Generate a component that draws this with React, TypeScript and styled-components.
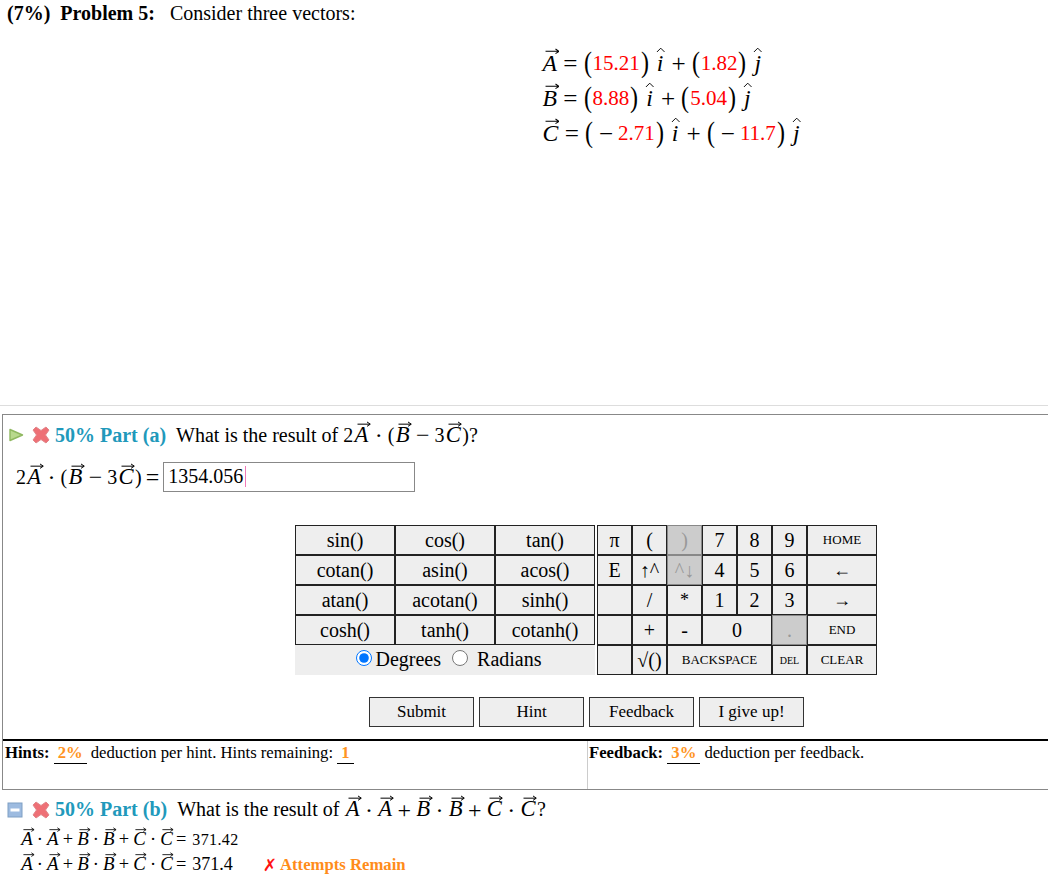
import React from 'react';
import styled, { createGlobalStyle } from 'styled-components';

const GlobalStyle = createGlobalStyle`
  html, body { margin: 0; padding: 0; background: #ffffff; }
  body {
    font-family: "Liberation Serif", "Times New Roman", serif;
    font-size: 20px;
    color: #000;
    overflow: hidden;
  }
`;

const Page = styled.div`
  width: 1048px;
  height: 885px;
  overflow: hidden;
`;

const ProblemHeader = styled.div`
  height: 27px;
  padding-left: 7px;
  display: flex;
  align-items: center;
  line-height: 27px;
`;

const Strong = styled.b<{ $gap?: number }>`
  margin-right: ${p => p.$gap ?? 0}px;
`;

const VectorBlock = styled.div`
  height: 378px;
  box-sizing: border-box;
  padding: 19px 0 0 541px;
`;

const VectorLine = styled.div`
  height: 35px;
  display: flex;
  align-items: center;
  white-space: nowrap;
  font-size: 21px;
`;

const MathOp = styled.span<{ $side?: number }>`
  font-size: 1.2em;
  line-height: 1;
  margin: 0 ${p => p.$side ?? 5}px;
`;

const Red = styled.span`
  color: #ff0000;
`;

const Paren = styled.span`
  font-size: 30px;
  font-weight: 400;
  line-height: 1;
  transform: scaleX(0.8);
  display: inline-block;
  position: relative;
  top: -2px;
`;

const VecWrap = styled.span`
  position: relative;
  display: inline-block;
  font-style: italic;
  font-size: 1.13em;
  line-height: 1;
  margin: 0 0.06em;
`;

const VecArrow = styled.svg`
  position: absolute;
  left: 0.1em;
  top: -0.14em;
  width: 0.62em;
  height: 0.28em;
`;

const HatWrap = styled.span`
  position: relative;
  display: inline-block;
  font-style: italic;
  font-size: 1.13em;
  line-height: 1;
  margin: 0 3px 0 7px;
`;

const HatMark = styled.svg`
  position: absolute;
  left: -0.04em;
  top: -0.2em;
  width: 0.4em;
  height: 0.26em;
`;

const Vec = ({ c }: { c: string }) => (
  <VecWrap>
    {c}
    <VecArrow viewBox="0 0 14 6">
      <path d="M0.5 3H13M10 0.8L13.3 3L10 5.2" fill="none" stroke="#000" strokeWidth="1" />
    </VecArrow>
  </VecWrap>
);

const Hat = ({ c }: { c: string }) => (
  <HatWrap>
    {c}
    <HatMark viewBox="0 0 10 6">
      <path d="M1 5L5 1L9 5" fill="none" stroke="#000" strokeWidth="1" />
    </HatMark>
  </HatWrap>
);

const Divider = styled.div`
  height: 1px;
  background: #dddddd;
  margin-bottom: 8px;
`;

const PartPanel = styled.div`
  margin-left: 2px;
  height: 376px;
  box-sizing: border-box;
  border: 1px solid #888888;
  border-right: none;
  display: flex;
  flex-direction: column;
`;

const PartTitle = styled.div<{ $left?: number; $height?: number; $top?: number }>`
  display: flex;
  align-items: center;
  box-sizing: border-box;
  height: ${p => p.$height ?? 40}px;
  padding: ${p => p.$top ?? 0}px 0 0 ${p => p.$left ?? 5}px;
  white-space: nowrap;
  font-size: 20px;
`;

const PartLabel = styled.b`
  color: #2199bb;
  margin: 0 10px 0 5px;
`;

const IconSlot = styled.svg<{ $right: number }>`
  flex: none;
  margin-right: ${p => p.$right}px;
`;

const AnswerRow = styled.div`
  display: flex;
  align-items: center;
  height: 30px;
  margin-top: 7px;
  padding-left: 13px;
  white-space: nowrap;
  font-size: 20px;
`;

const AnswerBox = styled.div`
  width: 252px;
  height: 30px;
  box-sizing: border-box;
  border: 1px solid #888888;
  padding-left: 4px;
  line-height: 26px;
  font-size: 20px;
`;

const Caret = styled.span`
  display: inline-block;
  width: 1px;
  height: 21px;
  margin-left: 2px;
  background: #f07ab8;
  vertical-align: -4px;
`;

const Keypad = styled.div`
  display: flex;
  gap: 2px;
  margin: 33px 0 0 292px;
`;

const FunctionPad = styled.div`
  display: grid;
  grid-template-columns: repeat(3, 100px);
  grid-auto-rows: 30px;
`;

const KeyPad = styled.div`
  display: grid;
  grid-template-columns: repeat(6, 35px) 70px;
  grid-auto-rows: 30px;
`;

const Key = styled.div<{ $span?: number; $size?: number; $off?: boolean }>`
  grid-column: span ${p => p.$span ?? 1};
  box-sizing: border-box;
  display: flex;
  align-items: center;
  justify-content: center;
  white-space: nowrap;
  border: 1px solid ${p => (p.$off ? '#888888' : '#222222')};
  background: ${p => (p.$off ? '#cccccc' : '#eeeeee')};
  color: ${p => (p.$off ? '#999999' : '#000000')};
  font-size: ${p => p.$size ?? 20}px;
`;

const UnitRow = styled.div`
  grid-column: span 3;
  display: flex;
  align-items: center;
  justify-content: center;
  background: #eeeeee;
  padding-left: 18px;
  padding-bottom: 2px;
  font-size: 20px;
`;

const Radio = styled.input`
  width: 16px;
  height: 16px;
  margin: 0 4px 3px 0;
`;

const UnitText = styled.span`
  margin-right: 11px;
`;

const ActionRow = styled.div`
  display: flex;
  gap: 5px;
  margin: 22px 0 0 366px;
`;

const ActionButton = styled.div`
  width: 105px;
  height: 30px;
  box-sizing: border-box;
  border: 1px solid #333333;
  background: #eeeeee;
  display: flex;
  align-items: center;
  justify-content: center;
  font-size: 17px;
`;

const InfoBar = styled.div`
  margin-top: 12px;
  border-top: 2px solid #000000;
  flex: 1;
  display: grid;
  grid-template-columns: 584px 1fr;
  font-size: 16.7px;
`;

const InfoCell = styled.div<{ $divided?: boolean }>`
  padding: 2px 0 0 ${p => (p.$divided ? 1 : 2)}px;
  border-left: ${p => (p.$divided ? '1px solid #cccccc' : 'none')};
  white-space: nowrap;
`;

const Rate = styled.b`
  display: inline-block;
  color: #ff9422;
  border-bottom: 1px solid #000000;
  padding: 0 4px;
  margin: 0 4px 0 0;
  line-height: 20px;
`;

const SmallMathRow = styled.div`
  display: flex;
  align-items: center;
  height: 25px;
  padding-left: 20px;
  white-space: nowrap;
  font-size: 16.7px;
`;

const SmallOp = styled.span`
  font-size: 1.1em;
  margin: 0 2px;
`;

const TinyOp = styled.span`
  font-size: 1.1em;
  margin: 0 3px;
`;

const Spaced = styled.span`
  font-size: 16px;
  letter-spacing: 0.4px;
  margin-left: 4px;
`;

const Plain = styled.span`
  margin-left: 4px;
  font-size: 18px;
`;

const Cross = styled.span`
  color: #ff1111;
  font-family: "DejaVu Sans", sans-serif;
  font-weight: 700;
  font-size: 17px;
  margin: 0 3px 0 30px;
`;

const Attempts = styled.b`
  color: #ff8c1a;
  font-size: 16.7px;
`;

const PlayIcon = () => (
  <IconSlot $right={8} width="16" height="14" viewBox="0 0 16 14">
    <path d="M2 1.5L14.5 7L2 12.5Z" fill="#b8d98c" stroke="#8fb860" strokeWidth="1.4" strokeLinejoin="round" />
  </IconSlot>
);

const CrossIcon = () => (
  <IconSlot $right={0} width="18" height="18" viewBox="0 0 18 18">
    <path
      d="M4 1L9 4.5L14 1L17 4L13.5 9L17 14L14 17L9 13.5L4 17L1 14L4.5 9L1 4Z"
      fill="#ee7076"
      stroke="#e2868a"
      strokeWidth="1"
      strokeLinejoin="round"
    />
  </IconSlot>
);

const CollapseIcon = () => (
  <IconSlot $right={9} width="16" height="16" viewBox="0 0 16 16">
    <rect x="1" y="1" width="14" height="14" fill="#9dbbe0" stroke="#7f9fc4" />
    <rect x="3.5" y="6.5" width="9" height="3" fill="#ffffff" />
  </IconSlot>
);

const DotSum = () => (
  <>
    <Vec c="A" /><TinyOp>·</TinyOp><Vec c="A" /><TinyOp>+</TinyOp>
    <Vec c="B" /><TinyOp>·</TinyOp><Vec c="B" /><TinyOp>+</TinyOp>
    <Vec c="C" /><TinyOp>·</TinyOp><Vec c="C" />
  </>
);

const PartAExpr = () => (
  <>
    2<Vec c="A" /><MathOp>·</MathOp>(<Vec c="B" /><MathOp>−</MathOp>3<Vec c="C" />)
  </>
);

const functionKeys = [
  'sin()', 'cos()', 'tan()',
  'cotan()', 'asin()', 'acos()',
  'atan()', 'acotan()', 'sinh()',
  'cosh()', 'tanh()', 'cotanh()'
];

const padKeys: Array<{ t: string; span?: number; size?: number; off?: boolean }> = [
  { t: 'π' }, { t: '(' }, { t: ')', off: true }, { t: '7' }, { t: '8' }, { t: '9' }, { t: 'HOME', size: 13 },
  { t: 'E' }, { t: '↑^' }, { t: '^↓', off: true }, { t: '4' }, { t: '5' }, { t: '6' }, { t: '←', size: 18 },
  { t: '' }, { t: '/' }, { t: '*', size: 18 }, { t: '1' }, { t: '2' }, { t: '3' }, { t: '→', size: 18 },
  { t: '' }, { t: '+' }, { t: '-' }, { t: '0', span: 2 }, { t: '.', off: true }, { t: 'END', size: 13 },
  { t: '' }, { t: '√()' }, { t: 'BACKSPACE', span: 3, size: 13 }, { t: 'DEL', size: 10 }, { t: 'CLEAR', size: 13 }
];

const App: React.FC = () => (
  <Page>
    <GlobalStyle />
    <ProblemHeader>
      <Strong $gap={10}>(7%)</Strong>
      <Strong $gap={15}>Problem 5:</Strong>
      Consider three vectors:
    </ProblemHeader>

    <VectorBlock>
      <VectorLine>
        <Vec c="A" /><MathOp>=</MathOp><Paren>(</Paren><Red>15.21</Red><Paren>)</Paren>
        <Hat c="i" /><MathOp>+</MathOp><Paren>(</Paren><Red>1.82</Red><Paren>)</Paren><Hat c="j" />
      </VectorLine>
      <VectorLine>
        <Vec c="B" /><MathOp>=</MathOp><Paren>(</Paren><Red>8.88</Red><Paren>)</Paren>
        <Hat c="i" /><MathOp>+</MathOp><Paren>(</Paren><Red>5.04</Red><Paren>)</Paren><Hat c="j" />
      </VectorLine>
      <VectorLine>
        <Vec c="C" /><MathOp>=</MathOp><Paren>(</Paren><MathOp>−</MathOp><Red>2.71</Red><Paren>)</Paren>
        <Hat c="i" /><MathOp>+</MathOp><Paren>(</Paren><MathOp>−</MathOp><Red>11.7</Red><Paren>)</Paren><Hat c="j" />
      </VectorLine>
    </VectorBlock>

    <Divider />

    <PartPanel>
      <PartTitle>
        <PlayIcon />
        <CrossIcon />
        <PartLabel>50% Part (a)</PartLabel>
        What is the result of&nbsp;<PartAExpr />?
      </PartTitle>

      <AnswerRow>
        <PartAExpr /><MathOp $side={4}>=</MathOp>
        <AnswerBox>1354.056<Caret /></AnswerBox>
      </AnswerRow>

      <Keypad>
        <FunctionPad>
          {functionKeys.map(k => (
            <Key key={k}>{k}</Key>
          ))}
          <UnitRow>
            <Radio type="radio" name="unit" defaultChecked />
            <UnitText>Degrees</UnitText>
            <Radio type="radio" name="unit" />
            <UnitText>&nbsp;Radians</UnitText>
          </UnitRow>
        </FunctionPad>
        <KeyPad>
          {padKeys.map((k, i) => (
            <Key key={i} $span={k.span} $size={k.size} $off={k.off}>{k.t}</Key>
          ))}
        </KeyPad>
      </Keypad>

      <ActionRow>
        <ActionButton>Submit</ActionButton>
        <ActionButton>Hint</ActionButton>
        <ActionButton>Feedback</ActionButton>
        <ActionButton>I give up!</ActionButton>
      </ActionRow>

      <InfoBar>
        <InfoCell>
          <b>Hints:</b> <Rate>2%</Rate>deduction per hint. Hints remaining: <Rate>1</Rate>
        </InfoCell>
        <InfoCell $divided>
          <b>Feedback:</b> <Rate>3%</Rate>deduction per feedback.
        </InfoCell>
      </InfoBar>
    </PartPanel>

    <PartTitle $left={7} $height={37} $top={2}>
      <CollapseIcon />
      <CrossIcon />
      <PartLabel>50% Part (b)</PartLabel>
      What is the result of&nbsp;
      <Vec c="A" /><MathOp $side={4}>·</MathOp><Vec c="A" /><MathOp $side={4}>+</MathOp>
      <Vec c="B" /><MathOp $side={4}>·</MathOp><Vec c="B" /><MathOp $side={4}>+</MathOp>
      <Vec c="C" /><MathOp $side={4}>·</MathOp><Vec c="C" />?
    </PartTitle>
    <SmallMathRow>
      <DotSum /><SmallOp>=</SmallOp><Spaced>371.42</Spaced>
    </SmallMathRow>
    <SmallMathRow>
      <DotSum /><SmallOp>=</SmallOp><Plain>371.4</Plain>
      <Cross>✗</Cross>
      <Attempts>Attempts Remain</Attempts>
    </SmallMathRow>
  </Page>
);

export default App;
